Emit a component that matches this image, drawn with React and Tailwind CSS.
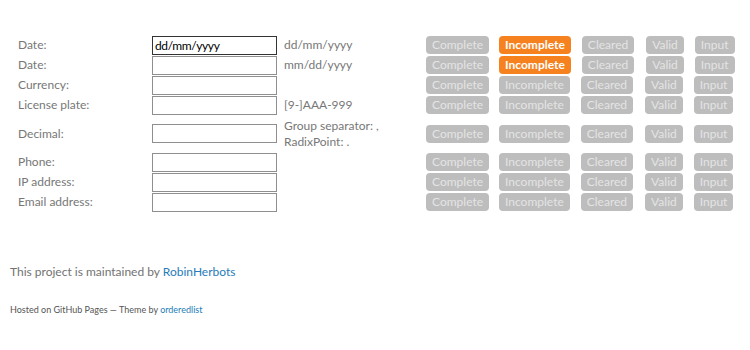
import React from 'react';

const rows = [
  { label: 'Date:', desc: ['dd/mm/yyyy'], value: 'dd/mm/yyyy', focused: true, incomplete: true },
  { label: 'Date:', desc: ['mm/dd/yyyy'], incomplete: true },
  { label: 'Currency:', desc: [] },
  { label: 'License plate:', desc: ['[9-]AAA-999'] },
  { label: 'Decimal:', desc: ['Group separator: ,', 'RadixPoint: .'], tall: true },
  { label: 'Phone:', desc: [] },
  { label: 'IP address:', desc: [] },
  { label: 'Email address:', desc: [] },
];

const Pill = ({ children, active, className = '' }) => (
  <span
    className={
      'inline-flex h-[18px] items-center rounded-[4px] px-[6px] text-[12px] leading-none ' +
      (active ? 'bg-[#f5821f] font-bold text-white ' : 'bg-[#bdbdbd] text-[#e4e4e4] ') +
      className
    }
  >
    {children}
  </span>
);

const Row = ({ row }) => (
  <div className={'flex items-center ' + (row.tall ? 'h-[37px]' : 'h-[20px]')}>
    <div className="w-[142px] pl-[8px] text-[12px] text-[#777]">{row.label}</div>
    <div className="w-[132px]">
      <div
        className={
          'h-[19px] w-[125px] border bg-white px-[2px] text-[12px] leading-[17px] tracking-[-0.4px] ' +
          (row.focused ? 'border-[#333] text-black' : 'border-[#8f8f8f]')
        }
      >
        {row.value || ''}
      </div>
    </div>
    <div className="w-[142px] text-[12px] leading-[16px] text-[#777]">
      {row.desc.map((d) => (
        <div key={d}>{d}</div>
      ))}
    </div>
    <div className="flex items-center">
      <Pill className="mr-[10px]">Complete</Pill>
      <Pill active={row.incomplete} className="mr-[11px]">Incomplete</Pill>
      <Pill className="mr-[12px]">Cleared</Pill>
      <Pill className="mr-[11px]">Valid</Pill>
      <Pill>Input</Pill>
    </div>
  </div>
);

export default function App() {
  return (
    <div className="h-[350px] w-[750px] bg-white pl-[10px] pt-[35px]" style={{ fontFamily: 'Lato, "Liberation Sans", sans-serif' }}>
      <div className="flex flex-col">
        {rows.map((r, i) => (
          <Row key={i} row={r} />
        ))}
      </div>
      <p className="mt-[51px] text-[12px] text-[#727272]">
        This project is maintained by <a className="text-[#267cb9]">RobinHerbots</a>
      </p>
      <p className="mt-[22px] text-[9px] text-[#555]">
        Hosted on GitHub Pages — Theme by <a className="text-[#267cb9]">orderedlist</a>
      </p>
    </div>
  );
}
